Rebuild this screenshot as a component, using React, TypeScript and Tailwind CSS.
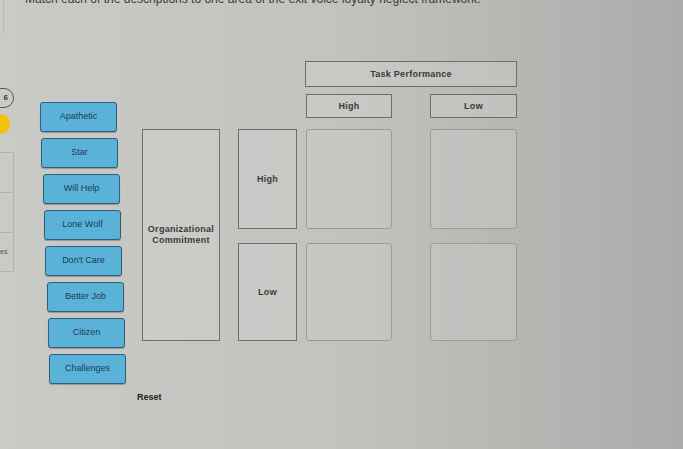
// Drag-and-drop matching exercise: description cards on the left, a 2x2 grid on the right

const cards = [
  "Apathetic",
  "Star",
  "Will Help",
  "Lone Wolf",
  "Don't Care",
  "Better Job",
  "Citizen",
  "Challenges",
];

const font = { fontFamily: '"Liberation Sans", Arial, sans-serif' };

const Card = ({ label }: { label: string }) => (
  <div className="w-[77px] h-[30px] flex items-center justify-center rounded-[3px] border border-[#2f5f78] bg-[#5bb2d9] text-[9px] text-[#1d3a56] shadow-[0_1px_1px_rgba(0,0,0,0.25)]">
    {label}
  </div>
);

const Box = ({ children, className = "" }: { children?: React.ReactNode; className?: string }) => (
  <div
    className={`flex items-center justify-center border border-[#6d6d6b] bg-[#d2d3cf]/40 text-[9px] font-bold text-[#3a3a3a] tracking-[0.03em] text-center leading-[11px] ${className}`}
  >
    {children}
  </div>
);

const Cell = () => <div className="rounded-[3px] border border-[#9a9a98] bg-[#cdcecb]/40" />;

export default function App() {
  return (
    <div
      className="w-[683px] h-[449px] overflow-hidden flex flex-col bg-linear-to-r from-[#cacbc7] via-[#c2c2bf] to-[#acaba9]"
      style={font}
    >
      {/* instruction line, cut off by the photo */}
      <div className="flex h-[34px]">
        <div className="w-[4px] border-r border-[#b9bab6]" />
        <p className="-mt-[10px] pl-[21px] text-[12px] text-[#3a3a3a] whitespace-nowrap">
          Match each of the descriptions to one area of the exit voice loyalty neglect framework.
        </p>
      </div>

      <div className="flex mt-[27px]">
        {/* sliver of the side panel */}
        <div className="w-[14px] flex flex-col pt-[27px]">
          <div className="-ml-[10px] w-[24px] h-[20px] rounded-full border border-[#555] flex items-center justify-end pr-[5px] text-[8px] font-bold text-[#333]">
            6
          </div>
          <div className="-ml-[8px] mt-[6px] w-[18px] h-[20px] rounded-full bg-[#f2c20c]" />
          <div className="mt-[18px] h-[120px] border-r border-y border-[#b3b4b0] flex flex-col">
            <div className="h-[40px] border-b border-[#b3b4b0]" />
            <div className="h-[40px] border-b border-[#b3b4b0]" />
            <div className="flex-1 flex items-center text-[7px] text-[#555]">es</div>
          </div>
        </div>

        {/* draggable cards */}
        <div className="ml-[26px] w-[90px] pt-[41px] flex flex-col gap-[6px]">
          {cards.map((c, i) => (
            <div key={c} style={{ marginLeft: Math.round(i * 1.3) }}>
              <Card label={c} />
            </div>
          ))}
        </div>

        {/* matching grid */}
        <div className="ml-[12px] flex flex-col">
          <div className="grid grid-cols-[78px_18px_59px_9px_86px_38px_87px] grid-rows-[26px_7px_24px_11px_100px_14px_98px]">
            <Box className="col-start-5 col-span-3 row-start-1 -ml-[1px]">Task Performance</Box>

            <Box className="col-start-5 row-start-3">High</Box>
            <Box className="col-start-7 row-start-3">Low</Box>

            <Box className="col-start-1 row-start-5 row-span-3">
              Organizational
              <br />
              Commitment
            </Box>

            <Box className="col-start-3 row-start-5">High</Box>
            <div className="col-start-5 row-start-5 grid">
              <Cell />
            </div>
            <div className="col-start-7 row-start-5 grid">
              <Cell />
            </div>

            <Box className="col-start-3 row-start-7">Low</Box>
            <div className="col-start-5 row-start-7 grid">
              <Cell />
            </div>
            <div className="col-start-7 row-start-7 grid">
              <Cell />
            </div>
          </div>

          <p className="mt-[50px] -ml-[5px] text-[9px] font-bold text-[#222]">Reset</p>
        </div>
      </div>
    </div>
  );
}
